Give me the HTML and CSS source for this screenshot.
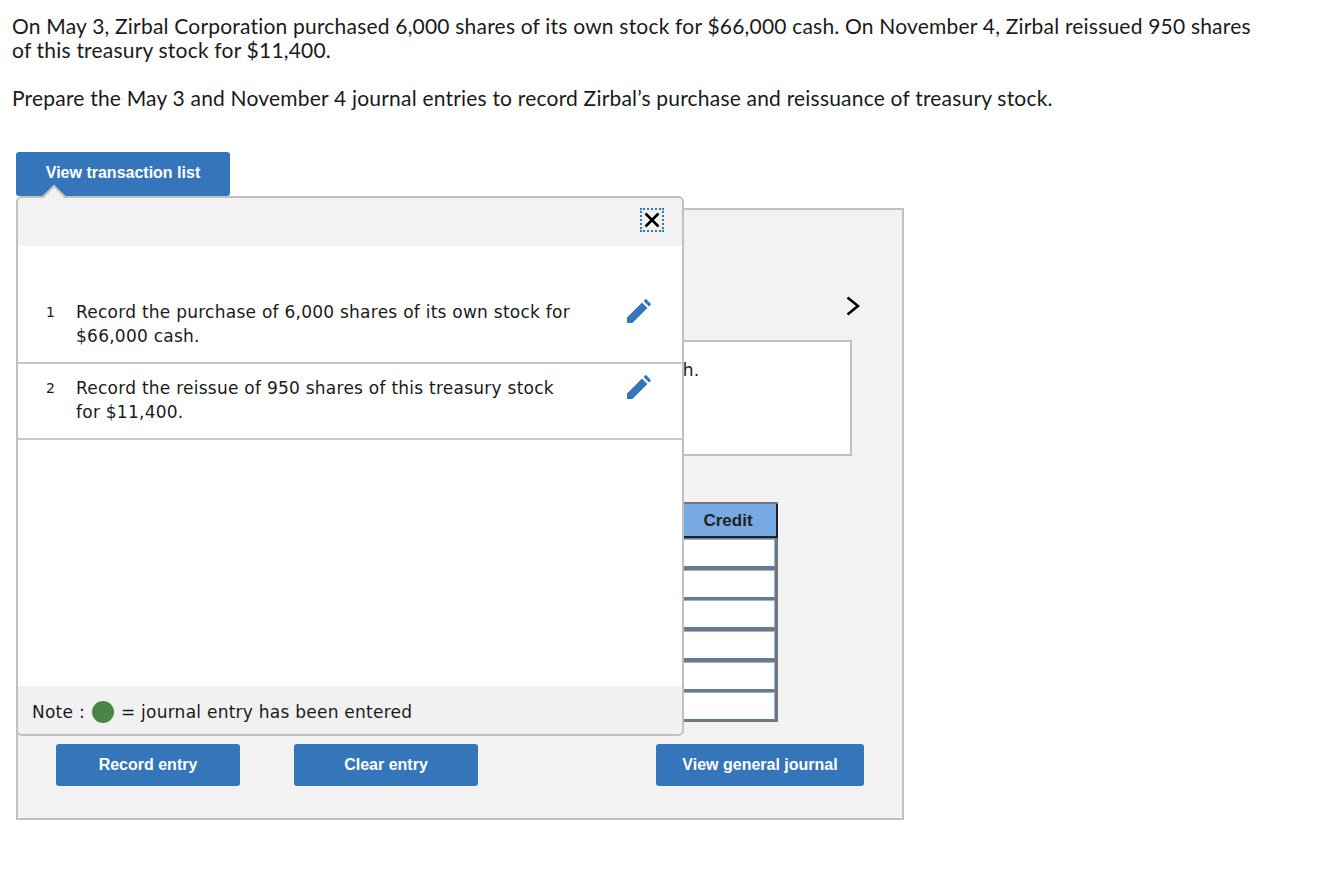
FILE: index.html
```html
<!DOCTYPE html>
<html>
<head>
    <title>Treasury Stock Journal Entries</title>
    <link rel="stylesheet" href="styles.css">
</head>
<body>
    <div class="question">
        <p>On May 3, Zirbal Corporation purchased 6,000 shares of its own stock for $66,000 cash. On November 4, Zirbal reissued 950 shares of this treasury stock for $11,400.</p>
        <p>Prepare the May 3 and November 4 journal entries to record Zirbal’s purchase and reissuance of treasury stock.</p>
    </div>
    <div class="workspace">
        <button class="btn btn-list">View transaction list</button>
        <div class="panel">
            <div class="nav-row">
                <svg class="chevron" width="14" height="20" viewBox="0 0 14 20">
                    <path d="M1.5 1.5 L12 10 L1.5 18.5" fill="none" stroke="#000" stroke-width="2.6"/>
                </svg>
            </div>
            <div class="entry-note">Record the purchase of 6,000 shares of its own stock for $66,000 cash.</div>
            <table class="journal">
                <thead>
                    <tr>
                        <th>Date</th>
                        <th>General Journal</th>
                        <th>Debit</th>
                        <th>Credit</th>
                    </tr>
                </thead>
                <tbody>
                    <tr><td><input></td><td><input></td><td><input></td><td><input></td></tr>
                    <tr><td><input></td><td><input></td><td><input></td><td><input></td></tr>
                    <tr><td><input></td><td><input></td><td><input></td><td><input></td></tr>
                    <tr><td><input></td><td><input></td><td><input></td><td><input></td></tr>
                    <tr><td><input></td><td><input></td><td><input></td><td><input></td></tr>
                    <tr><td><input></td><td><input></td><td><input></td><td><input></td></tr>
                </tbody>
            </table>
            <div class="panel-actions">
                <button class="btn btn-entry">Record entry</button>
                <button class="btn btn-entry">Clear entry</button>
                <button class="btn btn-journal">View general journal</button>
            </div>
        </div>

        <div class="popup">
            <div class="popup-caret"></div>
            <div class="popup-head">
                <button class="close-btn">
                    <svg width="16" height="16" viewBox="0 0 16 16">
                        <path d="M1.5 1.5 L14.5 14.5 M14.5 1.5 L1.5 14.5" stroke="#000" stroke-width="2.6"/>
                    </svg>
                </button>
            </div>
            <div class="popup-list">
                <div class="tx-row">
                    <span class="tx-num">1</span>
                    <span class="tx-text">Record the purchase of 6,000 shares of its own stock for $66,000 cash.</span>
                    <svg class="pencil" width="24" height="24" viewBox="0 0 24 24">
                        <path d="M0 24 L0 18.6 L15 3.6 L20.4 9 L5.4 24 Z M16.6 2 L18.3 0.3 Q18.8 -0.1 19.3 0.3 L23.7 4.7 Q24.1 5.2 23.7 5.7 L22 7.4 Z" fill="#3575b9"/>
                    </svg>
                </div>
                <div class="tx-row">
                    <span class="tx-num">2</span>
                    <span class="tx-text">Record the reissue of 950 shares of this treasury stock for $11,400.</span>
                    <svg class="pencil" width="24" height="24" viewBox="0 0 24 24">
                        <path d="M0 24 L0 18.6 L15 3.6 L20.4 9 L5.4 24 Z M16.6 2 L18.3 0.3 Q18.8 -0.1 19.3 0.3 L23.7 4.7 Q24.1 5.2 23.7 5.7 L22 7.4 Z" fill="#3575b9"/>
                    </svg>
                </div>
            </div>
            <div class="popup-note">
                <span>Note :</span>
                <span class="dot"></span>
                <span>= journal entry has been entered</span>
            </div>
        </div>
    </div>
</body>
</html>
```

FILE: styles.css
```css
body {
    font-family: Lato, "Open Sans", sans-serif;
    margin: 0;
    padding: 0;
    background-color: #fff;
    color: #1a1a1a;
}
.question {
    padding: 14px 60px 0 12px;
    font-size: 21px;
    letter-spacing: 0.2px;
    line-height: 24px;
}
.question p {
    margin: 0 0 24px;
}
.workspace {
    position: relative;
    margin: 42px 0 0 16px;
    width: 888px;
}
.btn {
    display: block;
    background-color: #3575b9;
    color: #fff;
    border: none;
    border-radius: 3px;
    font-family: "Liberation Sans", Arial, sans-serif;
    font-weight: bold;
    font-size: 16px;
    padding: 0;
    cursor: pointer;
}
.btn-list {
    width: 214px;
    height: 44px;
    margin-bottom: 12px;
    padding-bottom: 2px;
}
.panel {
    box-sizing: border-box;
    height: 612px;
    background-color: #f2f2f2;
    border: 2px solid #c0c0c0;
    padding: 0 38px;
}
.nav-row {
    display: flex;
    justify-content: flex-end;
    height: 130px;
    padding-top: 86px;
    padding-right: 4px;
    box-sizing: border-box;
}
.entry-note {
    box-sizing: border-box;
    width: 798px;
    height: 116px;
    margin-left: -2px;
    padding: 16px 10px 0 20px;
    background-color: #fff;
    border: 2px solid #c0c0c0;
    font-family: "DejaVu Sans", Verdana, sans-serif;
    font-size: 17px;
    letter-spacing: 0.25px;
    line-height: 24px;
    white-space: nowrap;
    overflow: hidden;
}
.journal {
    width: 722px;
    margin-top: 46px;
    border-collapse: separate;
    border-spacing: 0;
    table-layout: fixed;
    border-top: 2px solid #777;
}
.journal th {
    box-sizing: border-box;
    height: 34px;
    padding: 2px 0 0;
    background-color: #77aae3;
    border-bottom: 2px solid #222;
    font-family: "Liberation Sans", Arial, sans-serif;
    font-size: 17px;
    color: #222;
}
.journal th:last-child {
    width: 98px;
    border-right: 2px solid #222;
}
.journal td {
    height: 30.67px;
    padding: 0;
    vertical-align: top;
    background-color: #777;
}
.journal td:last-child {
    border-right: 3px solid #777;
}
.journal input {
    display: block;
    box-sizing: border-box;
    width: 100%;
    height: 28px;
    margin: 1px 0 0;
    border: 1px solid #8fb4e3;
    border-bottom-color: #4a80c4;
    background-color: #fff;
}
.panel-actions {
    display: flex;
    margin-top: 22px;
}
.btn-entry {
    width: 184px;
    height: 42px;
    margin-right: 54px;
}
.btn-journal {
    width: 208px;
    height: 42px;
    margin-left: 124px;
}

/* transaction list popup sits over the panel */
.popup {
    position: absolute;
    left: 0;
    top: 44px;
    box-sizing: border-box;
    width: 668px;
    height: 540px;
    display: flex;
    flex-direction: column;
    background-color: #fff;
    border: 2px solid #c0c0c0;
    border-radius: 6px;
    font-family: "DejaVu Sans", Verdana, sans-serif;
    font-size: 17px;
    letter-spacing: 0.25px;
    line-height: 24px;
    color: #1a1a1a;
}
.popup-caret {
    position: absolute;
    left: 28px;
    top: -10px;
    width: 14px;
    height: 14px;
    background-color: #f2f2f2;
    border-top: 2px solid #c0c0c0;
    border-left: 2px solid #c0c0c0;
    transform: rotate(45deg);
}
.popup-head {
    display: flex;
    justify-content: flex-end;
    height: 48px;
    padding: 10px 18px 0 0;
    box-sizing: border-box;
    background-color: #f2f2f2;
    border-radius: 4px 4px 0 0;
}
.close-btn {
    display: flex;
    align-items: center;
    justify-content: center;
    box-sizing: border-box;
    width: 24px;
    height: 24px;
    padding: 0;
    background: none;
    border: 2px dotted #3575b9;
}
.popup-list {
    flex: 1;
    padding-top: 42px;
}
.tx-row {
    display: flex;
    padding: 12px 0 14px 28px;
    border-bottom: 2px solid #c8c8c8;
}
.tx-num {
    width: 30px;
    font-size: 14px;
    letter-spacing: 0;
}
.tx-text {
    width: 500px;
}
.pencil {
    margin: -1px 0 0 51px;
}
.popup-note {
    display: flex;
    align-items: center;
    gap: 7px;
    box-sizing: border-box;
    height: 48px;
    padding: 4px 0 0 14px;
    background-color: #f1f1f1;
    border-radius: 0 0 4px 4px;
}
.dot {
    width: 22px;
    height: 22px;
    border-radius: 50%;
    background-color: #4a8745;
}
```
